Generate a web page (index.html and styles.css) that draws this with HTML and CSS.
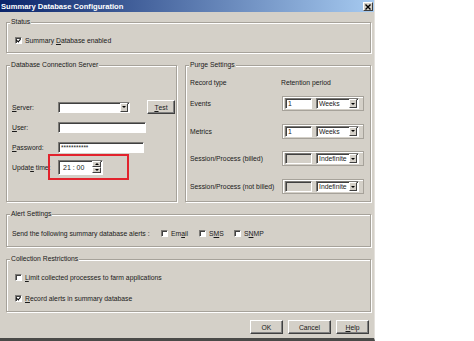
FILE: index.html
```html
<!DOCTYPE html>
<html lang="en">
<head>
<meta charset="UTF-8">
<title>Summary Database Configuration</title>
<link rel="stylesheet" href="styles.css">
</head>
<body>
<div class="dialog">
    <div class="titlebar">
        <span class="title">Summary Database Configuration</span>
        <span class="close">
            <svg width="6" height="6" viewBox="0 0 6 6"><path d="M0.5 0.5 L5.5 5.5 M5.5 0.5 L0.5 5.5" stroke="#000" stroke-width="1.4"/></svg>
        </span>
    </div>

    <div class="content">
        <fieldset class="group status">
            <legend>Status</legend>
            <div class="inner">
                <div class="check"><span class="box on"></span><span>Summary <u>D</u>atabase enabled</span></div>
            </div>
        </fieldset>

        <div class="split">
            <fieldset class="group conn">
                <legend>Database Connection Server</legend>
                <div class="inner">
                    <div class="field">
                        <span class="lbl"><u>S</u>erver:</span>
                        <span class="combo server"><span class="val"></span><span class="drop"><i class="arrow"></i></span></span>
                        <span class="btn test"><u>T</u>est</span>
                    </div>
                    <div class="field">
                        <span class="lbl"><u>U</u>ser:</span>
                        <span class="edit user"></span>
                    </div>
                    <div class="field">
                        <span class="lbl"><u>P</u>assword:</span>
                        <span class="edit pass">***********</span>
                    </div>
                    <div class="field time-row">
                        <span class="lbl">Updat<u>e</u> time:</span>
                        <span class="spin">
                            <span class="val">21 : 00</span>
                            <span class="arrows">
                                <span class="sbtn"><i class="up"></i></span>
                                <span class="sbtn"><i class="down"></i></span>
                            </span>
                        </span>
                        <span class="mark"></span>
                    </div>
                </div>
            </fieldset>

            <fieldset class="group purge">
                <legend>Purge Settings</legend>
                <div class="inner">
                    <div class="prow head">
                        <span>Record type</span>
                        <span>Retention period</span>
                    </div>
                    <div class="rows">
                        <div class="prow">
                            <span>Events</span>
                            <span class="panel"><span class="edit num">1</span><span class="combo unit"><span class="val">Weeks</span><span class="drop"><i class="arrow"></i></span></span></span>
                        </div>
                        <div class="prow">
                            <span>Metrics</span>
                            <span class="panel"><span class="edit num">1</span><span class="combo unit"><span class="val">Weeks</span><span class="drop"><i class="arrow"></i></span></span></span>
                        </div>
                        <div class="prow">
                            <span>Session/Process (billed)</span>
                            <span class="panel"><span class="edit num off"></span><span class="combo unit"><span class="val">Indefinite</span><span class="drop"><i class="arrow"></i></span></span></span>
                        </div>
                        <div class="prow">
                            <span>Session/Process (not billed)</span>
                            <span class="panel"><span class="edit num off"></span><span class="combo unit"><span class="val">Indefinite</span><span class="drop"><i class="arrow"></i></span></span></span>
                        </div>
                    </div>
                </div>
            </fieldset>
        </div>

        <fieldset class="group alerts">
            <legend>Alert Settings</legend>
            <div class="inner">
                <span class="send">Send the following summary database alerts :</span>
                <div class="check email"><span class="box"></span><span>Em<u>a</u>il</span></div>
                <div class="check sms"><span class="box"></span><span>S<u>M</u>S</span></div>
                <div class="check"><span class="box"></span><span>S<u>N</u>MP</span></div>
            </div>
        </fieldset>

        <fieldset class="group collect">
            <legend>Collection Restrictions</legend>
            <div class="inner">
                <div class="check"><span class="box"></span><span><u>L</u>imit collected processes to farm applications</span></div>
                <div class="check"><span class="box on"></span><span><u>R</u>ecord alerts in summary database</span></div>
            </div>
        </fieldset>

        <div class="buttons">
            <span class="btn ok">OK</span>
            <span class="btn cancel">Cancel</span>
            <span class="btn help"><u>H</u>elp</span>
        </div>
    </div>
</div>
</body>
</html>
```

FILE: styles.css
```css
body {
  margin: 0;
  background: #fff;
  font-family: "Liberation Sans", Arial, sans-serif;
  font-size: 6.8px;
  color: #1a1a1a;
}

.dialog {
  width: 374px;
  height: 338px;
  background: #d4d0c8;
  border-right: 1px solid #e4e1dc;
  border-bottom: 3px solid #4a4a48;
  display: flex;
  flex-direction: column;
}

.titlebar {
  height: 12px;
  padding: 0 1px 0 1px;
  background: linear-gradient(to right, #0a246a, #a6caf0);
  display: flex;
  align-items: center;
  justify-content: space-between;
}

.title {
  color: #fff;
  font-weight: bold;
  font-size: 7.6px;
}

.close {
  width: 8px;
  height: 7px;
  margin-top: 1px;
  background: #d4d0c8;
  border: 1px solid;
  border-color: #fff #404040 #404040 #fff;
  display: flex;
  align-items: center;
  justify-content: center;
}

.content {
  flex: 1;
  padding: 6px 3px 0 6px;
  display: flex;
  flex-direction: column;
  gap: 8px;
}

/* group boxes */
.group {
  margin: 0;
  padding: 0;
  min-width: 0;
  box-sizing: border-box;
  border: 1px solid #a6a29a;
  box-shadow: inset 1px 1px #fff, 1px 1px #fff;
}

.group legend {
  margin-left: 3px;
  padding: 0 1px;
  line-height: 8px;
  background: #d4d0c8;
}

.status {
  height: 35px;
}

.status .inner {
  padding: 10px 0 0 8px;
}

.split {
  height: 141px;
  display: flex;
  gap: 8px;
}

.conn {
  width: 171px;
}

.conn .inner {
  padding: 31px 0 0 5px;
}

.purge {
  flex: 1;
}

.purge .inner {
  padding: 8px 0 0 4px;
}

.alerts {
  height: 37px;
}

.alerts .inner {
  padding: 11px 0 0 5px;
  display: flex;
  align-items: center;
  height: 8px;
}

.collect {
  height: 57px;
}

.collect .inner {
  padding: 10px 0 0 8px;
  display: flex;
  flex-direction: column;
  gap: 13px;
}

/* checkboxes */
.check {
  display: flex;
  align-items: center;
  gap: 3px;
  height: 8px;
  white-space: nowrap;
}

.box {
  width: 5px;
  height: 5px;
  background: #fff;
  border: 1px solid;
  border-color: #7c7a76 #fff #fff #7c7a76;
  box-shadow: inset 1px 1px #404040;
  position: relative;
}

.box.on::after {
  content: "";
  position: absolute;
  left: 1px;
  top: 0px;
  width: 2px;
  height: 3px;
  border: solid #000;
  border-width: 0 1.5px 1.5px 0;
  transform: rotate(40deg);
}

.send {
  width: 149px;
  white-space: nowrap;
}

.check.email {
  width: 38px;
}

.check.sms {
  width: 35px;
}

/* connection fields */
.field {
  display: flex;
  align-items: center;
  height: 14px;
}

.field + .field {
  margin-top: 6px;
}

.lbl {
  width: 46px;
  white-space: nowrap;
}

.edit {
  height: 9px;
  line-height: 9px;
  padding-left: 2px;
  background: #fff;
  border: 1px solid;
  border-color: #7c7a76 #fff #fff #7c7a76;
  box-shadow: inset 1px 1px #404040;
  box-sizing: content-box;
}

.edit.user {
  width: 84px;
}

.edit.pass {
  width: 82px;
  font-size: 6.4px;
}

.combo {
  height: 9px;
  display: flex;
  align-items: center;
  background: #fff;
  border: 1px solid;
  border-color: #7c7a76 #fff #fff #7c7a76;
  box-shadow: inset 1px 1px #404040;
  padding: 0 1px 0 1px;
}

.combo .val {
  flex: 1;
  padding-left: 1px;
  line-height: 9px;
}

.combo.server {
  width: 68px;
}

.drop {
  width: 6px;
  height: 7px;
  background: #d4d0c8;
  border: 1px solid;
  border-color: #fff #404040 #404040 #fff;
  display: flex;
  align-items: center;
  justify-content: center;
}

.arrow {
  border-top: 2px solid #000;
  border-left: 2px solid transparent;
  border-right: 2px solid transparent;
}

.btn {
  height: 12px;
  display: flex;
  align-items: center;
  justify-content: center;
  background: #d4d0c8;
  border: 1px solid;
  border-color: #fff #404040 #404040 #fff;
  box-shadow: inset -1px -1px #808080;
}

.btn.test {
  width: 26px;
  margin-left: 17px;
}

/* time spinner */
.time-row {
  position: relative;
}

.spin {
  width: 43px;
  height: 13px;
  display: flex;
  align-items: center;
  background: #fff;
  border: 1px solid;
  border-color: #7c7a76 #fff #fff #7c7a76;
  box-shadow: inset 1px 1px #404040;
}

.spin .val {
  flex: 1;
  padding-left: 4px;
  font-size: 7px;
}

.arrows {
  display: flex;
  flex-direction: column;
  margin-right: 1px;
}

.sbtn {
  width: 7px;
  height: 4px;
  background: #d4d0c8;
  border: 1px solid;
  border-color: #fff #404040 #404040 #fff;
  display: flex;
  align-items: center;
  justify-content: center;
}

.up {
  border-bottom: 2px solid #000;
  border-left: 2px solid transparent;
  border-right: 2px solid transparent;
}

.down {
  border-top: 2px solid #000;
  border-left: 2px solid transparent;
  border-right: 2px solid transparent;
}

.mark {
  position: absolute;
  left: 36px;
  top: -6px;
  width: 81px;
  height: 26px;
  box-sizing: border-box;
  border: 2px solid #e2232d;
}

/* purge settings */
.prow {
  display: grid;
  grid-template-columns: 92px auto;
  align-items: center;
  white-space: nowrap;
}

.prow.head {
  grid-template-columns: 91px auto;
  height: 10px;
}

.rows {
  margin-top: 9px;
  display: flex;
  flex-direction: column;
  gap: 12.7px;
}

.rows .prow {
  height: 15px;
}

.panel {
  width: 76px;
  height: 13px;
  padding: 0 2px;
  display: flex;
  align-items: center;
  gap: 4px;
  border: 1px solid #a6a29a;
  box-shadow: inset 1px 1px #fff;
}

.edit.num {
  width: 23px;
}

.edit.num.off {
  background: #d4d0c8;
}

.combo.unit {
  width: 39px;
}

/* dialog buttons */
.buttons {
  height: 14px;
  padding-right: 2px;
  display: flex;
  justify-content: flex-end;
  gap: 5px;
}

.buttons .btn {
  width: 31px;
}

.buttons .btn.cancel {
  width: 41px;
}
```
